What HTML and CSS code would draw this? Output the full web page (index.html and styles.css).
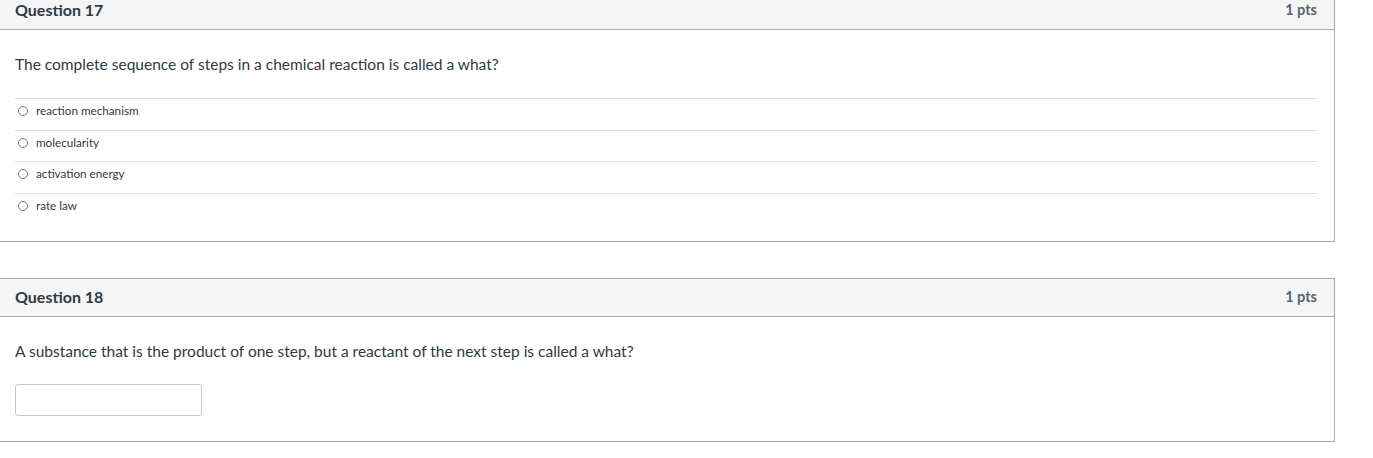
FILE: index.html
```html
<!DOCTYPE html>
<html lang="en">
<head>
    <meta charset="UTF-8">
    <title>Quiz</title>
    <link rel="stylesheet" href="styles.css">
</head>
<body>
    <div class="quiz">
        <div class="question">
            <div class="question-header">
                <span class="question-name">Question 17</span>
                <span class="question-points">1 pts</span>
            </div>
            <div class="question-body">
                <div class="question-text">The complete sequence of steps in a chemical reaction is called a what?</div>
                <div class="answers">
                    <label class="answer"><span class="radio"></span>reaction mechanism</label>
                    <label class="answer"><span class="radio"></span>molecularity</label>
                    <label class="answer"><span class="radio"></span>activation energy</label>
                    <label class="answer"><span class="radio"></span>rate law</label>
                </div>
            </div>
        </div>

        <div class="question">
            <div class="question-header">
                <span class="question-name">Question 18</span>
                <span class="question-points">1 pts</span>
            </div>
            <div class="question-body short">
                <div class="question-text">A substance that is the product of one step, but a reactant of the next step is called a what?</div>
                <input type="text" class="answer-input">
            </div>
        </div>
    </div>
</body>
</html>
```

FILE: styles.css
```css
body {
    margin: 0;
    font-family: Lato, "Open Sans", sans-serif;
    color: #2d3b45;
    background-color: #fff;
}

.quiz {
    margin-top: -9px;
    margin-left: -1px;
    width: 1336px;
    display: flex;
    flex-direction: column;
    gap: 36px;
}

.question {
    border: 1px solid #a9a9a9;
}

.question-header {
    height: 38px;
    box-sizing: border-box;
    display: flex;
    align-items: center;
    justify-content: space-between;
    padding: 0 17px 2px 15px;
    background-color: #f5f5f5;
    border-bottom: 1px solid #a9a9a9;
}

.question-name {
    font-size: 16px;
    font-weight: bold;
    color: #2d3b45;
}

.question-points {
    font-size: 14.5px;
    font-weight: bold;
    color: #556572;
}

.question-body {
    padding: 24px 17px 16px 15px;
}

.question-text {
    font-size: 15.5px;
    line-height: 20px;
    margin-bottom: 24px;
}

.answer {
    display: flex;
    align-items: center;
    border-top: 1px solid #dedede;
    padding: 4px 0 11px 3px;
    line-height: 15.7px;
    font-size: 11.7px;
}

.radio {
    width: 8px;
    height: 8px;
    border: 1px solid #777;
    border-radius: 50%;
    margin-right: 8px;
}

.question-body.short {
    padding-top: 24px;
    padding-bottom: 25px;
}

.question-body.short .question-text {
    margin-bottom: 23px;
}

.answer-input {
    display: block;
    width: 187px;
    height: 32px;
    box-sizing: border-box;
    margin: 0;
    border: 1px solid #c8c8c8;
    border-radius: 3px;
    background: #fff;
}
```
